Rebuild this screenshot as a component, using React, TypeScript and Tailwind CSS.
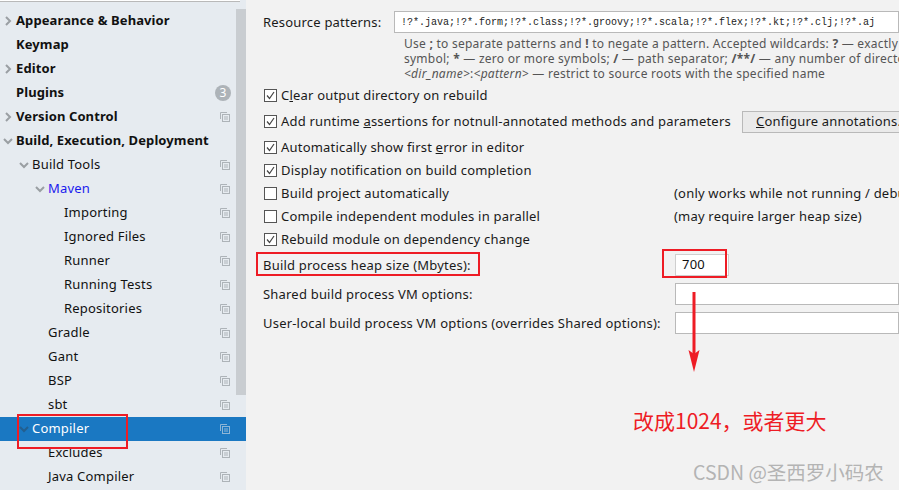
const tree = [
  { label: "Appearance & Behavior", level: 0, bold: true, arrow: "right" },
  { label: "Keymap", level: 0, bold: true },
  { label: "Editor", level: 0, bold: true, arrow: "right" },
  { label: "Plugins", level: 0, bold: true, badge: "3" },
  { label: "Version Control", level: 0, bold: true, arrow: "right", copy: true },
  { label: "Build, Execution, Deployment", level: 0, bold: true, arrow: "down" },
  { label: "Build Tools", level: 1, arrow: "down", copy: true },
  { label: "Maven", level: 2, arrow: "down", copy: true, link: true },
  { label: "Importing", level: 3, copy: true },
  { label: "Ignored Files", level: 3, copy: true },
  { label: "Runner", level: 3, copy: true },
  { label: "Running Tests", level: 3, copy: true },
  { label: "Repositories", level: 3, copy: true },
  { label: "Gradle", level: 2, copy: true },
  { label: "Gant", level: 2, copy: true },
  { label: "BSP", level: 2, copy: true },
  { label: "sbt", level: 2, copy: true },
  { label: "Compiler", level: 1, arrow: "down", copy: true, selected: true },
  { label: "Excludes", level: 2, copy: true },
  { label: "Java Compiler", level: 2, copy: true },
]

const levelPad = ["pl-[16px]", "pl-[32px]", "pl-[48px]", "pl-[64px]"]
const arrowPad = ["left-[3px]", "left-[19px]", "left-[35px]", "left-[51px]"]

function Chevron({ dir, selected }: { dir: string; selected?: boolean }) {
  return (
    <svg width="10" height="10" viewBox="0 0 10 10" fill="none" stroke={selected ? "#235f8f" : "#9a9fa3"} strokeWidth="2">
      {dir === "right" ? <path d="M3 1l4 4-4 4" /> : <path d="M1 3l4 4 4-4" />}
    </svg>
  )
}

function CopyIcon({ selected }: { selected?: boolean }) {
  return (
    <svg width="10" height="10" viewBox="0 0 10 10" fill="none" stroke={selected ? "#8fb6d6" : "#adb3b8"} strokeWidth="1" className="absolute left-[220px] top-[7px]">
      <path d="M0.5 7V0.5H7" />
      <rect x="2.5" y="2.5" width="7" height="7" />
      <path d="M4 5h4M4 7h4" />
    </svg>
  )
}

function TreeRow({ item }: { item: (typeof tree)[number] }) {
  return (
    <div className={`relative h-[24px] flex items-center text-[13px] ${levelPad[item.level]} ${item.selected ? "bg-[#1a78c2] text-white" : item.link ? "text-[#1a1aee]" : "text-[#111]"} ${item.bold ? "font-bold tracking-[0.1px]" : ""}`}>
      {item.arrow && (
        <span className={`absolute top-[7px] ${arrowPad[item.level]}`}>
          <Chevron dir={item.arrow} selected={item.selected} />
        </span>
      )}
      {item.label}
      {item.badge && (
        <span className="absolute left-[215px] top-[4px] w-[16px] h-[16px] rounded-full bg-[#adb3b8] text-white text-[12px] font-normal flex items-center justify-center">
          {item.badge}
        </span>
      )}
      {item.copy && <CopyIcon selected={item.selected} />}
    </div>
  )
}

function Box({ on }: { on: boolean }) {
  return (
    <span className="w-[13px] h-[13px] shrink-0 border border-[#555] bg-white flex items-center justify-center ml-[1px] mr-[4px]">
      {on && (
        <svg width="11" height="11" viewBox="0 0 11 11" fill="none" stroke="#444" strokeWidth="1.2">
          <path d="M2 5.5l2.5 3L9 2" />
        </svg>
      )}
    </span>
  )
}

function Check({ on, children, hint }: { on: boolean; children: React.ReactNode; hint?: string }) {
  return (
    <div className="h-[23px] flex items-center">
      <Box on={on} />
      <span className="w-[393px] shrink-0 pt-[1px]">{children}</span>
      {hint && <span className="pt-[1px]">{hint}</span>}
    </div>
  )
}

export default function App() {
  return (
    <div className="relative w-[899px] h-[490px] overflow-hidden flex bg-[#f2f2f2] text-[#1a1a1a] text-[13px] tracking-[0.2px] font-['Noto_Sans','Liberation_Sans',sans-serif]">
      <div className="relative w-[246px] shrink-0 bg-[#e6ebf0] pt-[9px]">
        <div className="absolute left-0 top-0 w-[240px] h-[2px] bg-white border-b border-[#b9b9b9]"></div>
        <div className="absolute left-[236px] top-[9px] w-[10px] h-[386px] bg-[#c9cdd1]"></div>
        {tree.map((item) => (
          <TreeRow key={item.label} item={item} />
        ))}
      </div>

      <div className="w-[653px] shrink-0 pl-[17px] pt-[11px] whitespace-nowrap">
        <div className="flex items-center h-[22px]">
          <span className="w-[131px] shrink-0 pt-[1px]">Resource patterns:</span>
          <div className="flex-1 h-[22px] bg-white border border-[#b9b9b9] pl-[6px] flex items-center text-[10px] tracking-normal text-[#222] font-['Liberation_Mono',monospace]">
            !?*.java;!?*.form;!?*.class;!?*.groovy;!?*.scala;!?*.flex;!?*.kt;!?*.clj;!?*.aj
          </div>
        </div>
        <div className="pl-[141px] pt-[3px] text-[12px] tracking-[0.25px] leading-[15px] text-[#555] h-[49px]">
          <div>Use <b>;</b> to separate patterns and <b>!</b> to negate a pattern. Accepted wildcards: <b>?</b> — exactly one</div>
          <div>symbol; <b>*</b> — zero or more symbols; <b>/</b> — path separator; <b>/**/</b> — any number of directories;</div>
          <div><i>&lt;dir_name&gt;</i>:<i>&lt;pattern&gt;</i> — restrict to source roots with the specified name</div>
        </div>
        <div className="h-[26px] flex items-center">
          <Box on />
          <span className="pt-[1px]">C<span className="underline">l</span>ear output directory on rebuild</span>
        </div>
        <div className="h-[27px] mb-[1px] flex items-center">
          <Box on />
          <span className="w-[461px] shrink-0 pt-[1px]">Add runtime <span className="underline">a</span>ssertions for notnull-annotated methods and parameters</span>
          <span className="h-[22px] w-[170px] shrink-0 bg-[#eaeaea] border border-[#b9b9b9] pl-[13px] flex items-center">
            <span><span className="underline">C</span>onfigure annotations...</span>
          </span>
        </div>
        <Check on>Automatically show first <span className="underline">e</span>rror in editor</Check>
        <Check on>Display notification on build completion</Check>
        <Check on={false} hint="(only works while not running / debugging)">Build project automatically</Check>
        <Check on={false} hint="(may require larger heap size)">Compile independent modules in parallel</Check>
        <Check on>Rebuild module on dependency change</Check>

        <div className="flex items-center h-[22px] mt-[3px]">
          <span className="w-[412px] shrink-0 pt-[1px]">Build process heap size (Mbytes):</span>
          <span className="w-[54px] h-[22px] bg-white border border-[#cfcfcf] pl-[6px] flex items-center text-[#111]">700</span>
        </div>
        <div className="flex items-center h-[22px] mt-[7px]">
          <span className="w-[412px] shrink-0 pt-[1px]">Shared build process VM options:</span>
          <span className="flex-1 h-[22px] bg-white border border-[#b9b9b9]"></span>
        </div>
        <div className="flex items-center h-[22px] mt-[7px]">
          <span className="w-[412px] shrink-0 pt-[1px]">User-local build process VM options (overrides Shared options):</span>
          <span className="flex-1 h-[22px] bg-white border border-[#b9b9b9]"></span>
        </div>
      </div>

      {/* hand drawn annotations on top of the screenshot */}
      <div className="absolute left-[17px] top-[414px] w-[111px] h-[35px] border-2 border-[#ee1c25]"></div>
      <div className="absolute left-[256px] top-[252px] w-[224px] h-[24px] border-2 border-[#ee1c25]"></div>
      <div className="absolute left-[662px] top-[249px] w-[65px] h-[29px] border-2 border-[#ee1c25]"></div>
      <svg className="absolute left-[684px] top-[292px]" width="20" height="82" viewBox="0 0 20 82" fill="#ee1c25">
        <rect x="8.5" y="0" width="3" height="62" />
        <path d="M4.5 58L10 80l5.5-22L10 62z" />
      </svg>
      <div className="absolute left-[633px] top-[405px] text-[21px] tracking-normal leading-[30px] text-[#ee1c25] whitespace-nowrap font-['Noto_Sans_CJK_SC','Liberation_Sans',sans-serif]">
        改成1024，或者更大
      </div>
      <div className="absolute left-[693px] top-[459px] text-[19.5px] tracking-normal leading-[26px] text-[#b4b4b4] whitespace-nowrap font-['Noto_Sans_CJK_SC','Liberation_Sans',sans-serif]">
        CSDN @圣西罗小码农
      </div>
    </div>
  )
}
